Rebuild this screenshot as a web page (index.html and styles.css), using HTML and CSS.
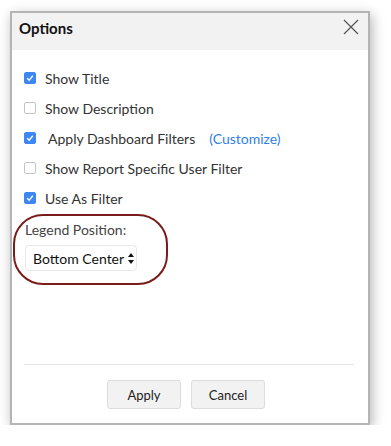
FILE: index.html
```html
<!DOCTYPE html>
<html lang="en">
<head>
    <meta charset="UTF-8">
    <title>Options</title>
    <link rel="stylesheet" href="styles.css">
</head>
<body>
    <div class="dialog">
        <div class="dialog-header">
            <span class="dialog-title">Options</span>
            <svg class="close" width="16" height="16" viewBox="0 0 16 16">
                <path d="M1 1 L15 15 M15 1 L1 15" stroke="#555" stroke-width="1.2" fill="none"/>
            </svg>
        </div>

        <div class="dialog-body">
            <div class="option">
                <span class="check checked"><svg width="12" height="12" viewBox="0 0 12 12"><path d="M3.2 6.2 L5.2 8.2 L8.8 3.8" stroke="#fff" stroke-width="1.4" fill="none"/></svg></span>
                <span>Show Title</span>
            </div>
            <div class="option">
                <span class="check"></span>
                <span>Show Description</span>
            </div>
            <div class="option">
                <span class="check checked"><svg width="12" height="12" viewBox="0 0 12 12"><path d="M3.2 6.2 L5.2 8.2 L8.8 3.8" stroke="#fff" stroke-width="1.4" fill="none"/></svg></span>
                <span class="wide">Apply Dashboard Filters</span>
                <a class="link">(Customize)</a>
            </div>
            <div class="option">
                <span class="check"></span>
                <span>Show Report Specific User Filter</span>
            </div>
            <div class="option">
                <span class="check checked"><svg width="12" height="12" viewBox="0 0 12 12"><path d="M3.2 6.2 L5.2 8.2 L8.8 3.8" stroke="#fff" stroke-width="1.4" fill="none"/></svg></span>
                <span>Use As Filter</span>
            </div>

            <div class="legend">
                <div class="legend-label">Legend Position:</div>
                <div class="select">
                    <span>Bottom Center</span>
                    <svg width="6" height="11" viewBox="0 0 6 11"><path d="M3 0 L6 4 L0 4 Z M0 7 L6 7 L3 11 Z" fill="#111"/></svg>
                </div>
            </div>
        </div>

        <div class="divider"></div>
        <div class="dialog-footer">
            <button class="btn">Apply</button>
            <button class="btn">Cancel</button>
        </div>
    </div>
</body>
</html>
```

FILE: styles.css
```css
body {
    margin: 0;
    background: #ffffff;
    font-family: 'Lato', 'Open Sans', sans-serif;
    color: #333;
}

.dialog {
    margin: 11px 0 0 10px;
    width: 360px;
    height: 414px;
    box-sizing: border-box;
    border: 2px solid #b4b4b4;
    background: #fff;
    box-shadow: 2px 4px 12px rgba(0,0,0,0.3);
    display: flex;
    flex-direction: column;
}

.dialog-header {
    height: 37px;
    box-sizing: border-box;
    background: #f2f2f2;
    display: flex;
    align-items: flex-start;
    justify-content: space-between;
    padding: 5px 9px 0 7px;
}

.dialog-title {
    font-size: 15px;
    line-height: 20px;
    font-weight: 700;
    color: #111;
}

.close {
    margin-top: 1px;
}

.dialog-body {
    flex: 1;
    padding: 13px 12px 0 12px;
}

.option {
    height: 30px;
    display: flex;
    align-items: center;
    font-size: 14px;
    color: #333;
}

.check {
    width: 12px;
    height: 12px;
    box-sizing: border-box;
    border: 1px solid #c4c4c4;
    border-radius: 2px;
    background: #fff;
    margin-right: 9px;
    display: flex;
}

.check.checked {
    border-color: #3d87f5;
    background: #3d87f5;
}

.check.checked svg {
    margin: -1px;
}

.wide {
    margin-left: 3px;
}

.link {
    color: #2f7fe8;
    margin-left: 14px;
}

.legend {
    margin-left: -11px;
    margin-top: 1px;
    width: 155px;
    height: 71px;
    box-sizing: border-box;
    border: 2px solid #7b1c1c;
    border-radius: 30px;
    padding: 5px 0 0 10px;
}

.legend-label {
    font-size: 14px;
    line-height: 18px;
    color: #444;
}

.select {
    margin-top: 6px;
    width: 112px;
    height: 26px;
    box-sizing: border-box;
    border: 1px solid #e8e8e8;
    border-radius: 4px;
    display: flex;
    align-items: center;
    gap: 4px;
    padding: 0 0 0 7px;
    font-size: 14px;
    white-space: nowrap;
    color: #111;
}

.divider {
    height: 1px;
    background: #e6e6e6;
    margin: 0 14px 0 12px;
}

.dialog-footer {
    display: flex;
    justify-content: center;
    gap: 10px;
    padding: 15px 8px 14px 0;
}

.btn {
    width: 74px;
    height: 29px;
    border: 1px solid #dcdcdc;
    border-radius: 3px;
    background: #f2f2f2;
    font-family: 'Lato', 'Open Sans', sans-serif;
    font-size: 13px;
    color: #222;
    cursor: pointer;
}
```
